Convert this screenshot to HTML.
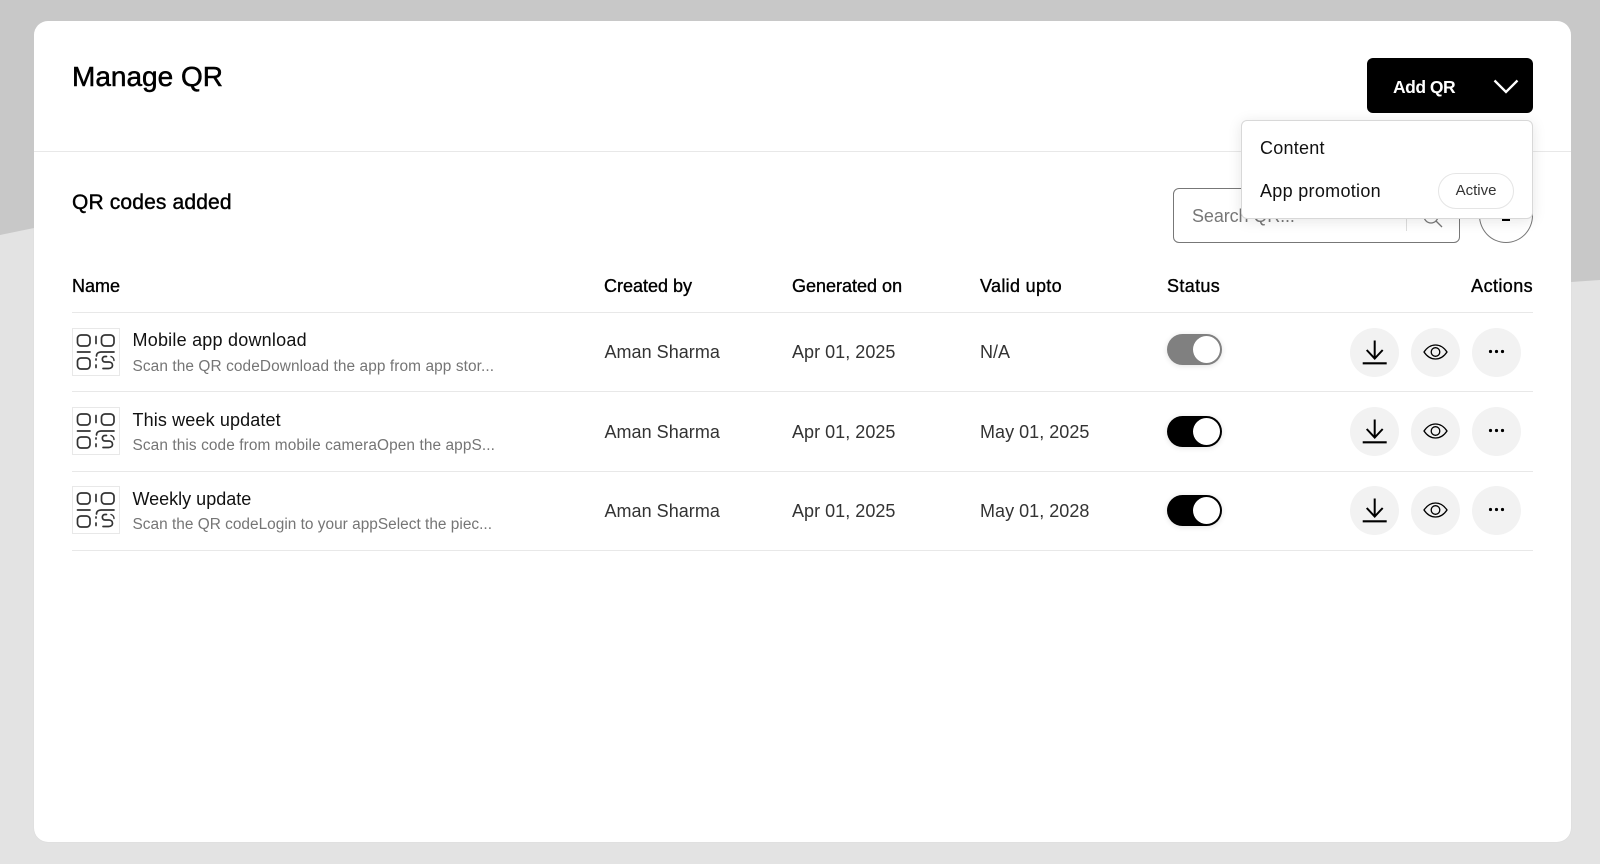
<!DOCTYPE html>
<html>
<head>
<meta charset="utf-8">
<style>
html,body{margin:0;padding:0;width:1600px;height:864px;overflow:hidden;background:#e3e3e3;font-family:"Liberation Sans",sans-serif;color:#000}
.a{position:absolute;white-space:nowrap}
#bg{position:absolute;left:0;top:0}
#card{position:absolute;left:34px;top:21px;width:1537px;height:821px;background:#fff;border-radius:14px;box-shadow:0 0 1px #ccc}
.line{position:absolute;left:72px;width:1461px;height:1px;background:#e8e8e8}
.m{-webkit-text-stroke:.4px currentColor}
.th{font-size:18px;line-height:22px;top:275px;-webkit-text-stroke:.35px #000;color:#000}
.td{font-size:18px;line-height:22px;color:#333;letter-spacing:.03px}
.t1{font-size:18px;line-height:22px;color:#111;letter-spacing:.22px}
.t2{font-size:15.4px;line-height:20px;color:#757575;letter-spacing:.1px}
.qr{position:absolute;left:71.500px;width:46px;height:46px;border:1px solid #e8e8e8}
.tg{position:absolute;left:1167px;width:55px;height:31px;border-radius:16px}
.tg i{position:absolute;right:2px;top:2px;width:27px;height:27px;border-radius:50%;background:#fff}
.cb{position:absolute;width:49px;height:49px;border-radius:50%;background:#f2f2f2}
</style>
</head>
<body>
<svg id="bg" width="1600" height="864" viewBox="0 0 1600 864">
<rect width="1600" height="864" fill="#e3e3e3"/>
<path d="M0 0H1600V280L1571 282L34 228L0 235Z" fill="#c8c8c8"/>
</svg>
<div id="card"></div>

<div class="a" style="left:72px;top:60px;font-size:28px;line-height:34px;-webkit-text-stroke:.5px #000">Manage QR</div>
<div class="a" style="left:1367px;top:58px;width:166px;height:55px;background:#000;border-radius:6px"></div>
<div class="a" style="left:1393px;top:76px;font-size:17.5px;line-height:22px;font-weight:700;color:#fff;letter-spacing:-.5px">Add QR</div>
<svg class="a" style="left:1490px;top:74px" width="32" height="24" viewBox="0 0 32 24"><path d="M4.500 6.500L16 18L27.500 6.500" fill="none" stroke="#fff" stroke-width="2.300"/></svg>
<div class="line" style="left:34px;width:1537px;top:151px"></div>

<div class="a m" style="left:72px;top:191px;font-size:21px;line-height:24px;letter-spacing:.15px">QR codes added</div>

<div class="a" style="left:1173px;top:188px;width:285px;height:53px;border:1px solid #777;border-radius:6px;background:#fff"></div>
<div class="a" style="left:1192px;top:205px;font-size:18px;line-height:22px;color:#777;letter-spacing:-.1px">Search QR...</div>
<div class="a" style="left:1406px;top:205px;width:1px;height:26px;background:#ddd"></div>
<svg class="a" style="left:1420px;top:205px" width="26" height="26" viewBox="0 0 26 26"><circle cx="11" cy="11" r="7" fill="none" stroke="#777" stroke-width="1.300"/><path d="M16 16L22 22" stroke="#777" stroke-width="1.300"/></svg>
<div class="a" style="left:1479px;top:188px;width:52px;height:53px;border:1px solid #777;border-radius:50%;background:#fff"></div>
<div class="a" style="left:1502px;top:219px;width:8px;height:2px;background:#000"></div>

<div class="a" style="left:1241px;top:120px;width:290px;height:97px;background:#fff;border:1px solid #d8d8d8;border-radius:6px;box-shadow:0 2px 14px rgba(0,0,0,.1)"></div>
<div class="a" style="left:1260px;top:137px;font-size:18px;line-height:22px;color:#111;letter-spacing:.25px">Content</div>
<div class="a" style="left:1260px;top:180px;font-size:18px;line-height:22px;color:#111;letter-spacing:.3px">App promotion</div>
<div class="a" style="left:1438px;top:173px;width:74px;height:34px;border:1px solid #e5e5e5;border-radius:18px;text-align:center;font-size:15px;line-height:34px;color:#333">Active</div>

<div class="a th" style="left:72px">Name</div>
<div class="a th" style="left:604px">Created by</div>
<div class="a th" style="left:792px">Generated on</div>
<div class="a th" style="left:980px;letter-spacing:.32px">Valid upto</div>
<div class="a th" style="left:1167px;letter-spacing:.35px">Status</div>
<div class="a th" style="right:67px;letter-spacing:.4px">Actions</div>
<div class="line" style="top:312px"></div>
<div class="line" style="top:391px"></div>
<div class="line" style="top:471px"></div>
<div class="line" style="top:550px"></div>

<svg width="0" height="0" style="position:absolute"><defs>
<g id="q" fill="none" stroke="#333" stroke-width="1.700" stroke-linecap="round">
<rect x="4.500" y="6" width="12.500" height="11" rx="3.500"/>
<rect x="28.500" y="6" width="12.500" height="11" rx="3.500"/>
<path d="M23 7.500V14.500"/>
<path d="M4.500 23H17"/>
<rect x="4.500" y="29" width="12.500" height="11" rx="3.500"/>
<path d="M23 30V31M23 36V38.500"/>
<path d="M23.500 27C23.500 24.500 25.500 23 28 23H41"/>
<path d="M33.500 27.500H32C28.500 27.500 28.500 33 32 33H36C40.500 33 41 39.500 35.500 39.500H30"/>
<path d="M38 27.500C39.500 28 41 29.500 41 31.500" stroke-width="1.400"/>
</g>
<g id="d" fill="none" stroke="#000" stroke-width="2">
<path d="M24.700 12.500V30.500M16.700 22L24.700 30.500L32.700 22"/>
<path d="M12.700 35.300H36.700" stroke-width="2.200"/>
</g>
<g id="e" fill="none" stroke="#000" stroke-width="1.300">
<path d="M13 24C16.500 18.800 20.300 17 24.500 17C28.700 17 32.500 18.800 36 24C32.500 29.200 28.700 31 24.500 31C20.300 31 16.500 29.200 13 24Z"/>
<circle cx="24.500" cy="24" r="4.300"/>
</g>
<g id="o" fill="#000"><circle cx="18.500" cy="23.500" r="1.600"/><circle cx="24.500" cy="23.500" r="1.600"/><circle cx="30.500" cy="23.500" r="1.600"/></g>
</defs></svg>

<!-- Row 1 -->
<div class="qr" style="top:328px"><svg width="46" height="46"><use href="#q"/></svg></div>
<div class="a t1" style="left:132.500px;top:329px">Mobile app download</div>
<div class="a t2" style="left:132.500px;top:356.500px">Scan the QR codeDownload the app from app stor...</div>
<div class="a td" style="left:604.500px;top:341px">Aman Sharma</div>
<div class="a td" style="left:792px;top:341px">Apr 01, 2025</div>
<div class="a td" style="left:980px;top:341px">N/A</div>
<div class="tg" style="top:334px;background:#808080;box-shadow:0 1px 6px rgba(0,0,0,.12)"><i></i></div>
<div class="cb" style="left:1350px;top:328px"><svg width="49" height="49"><use href="#d"/></svg></div>
<div class="cb" style="left:1411px;top:328px"><svg width="49" height="49"><use href="#e"/></svg></div>
<div class="cb" style="left:1472px;top:328px"><svg width="49" height="49"><use href="#o"/></svg></div>

<!-- Row 2 -->
<div class="qr" style="top:407px"><svg width="46" height="46"><use href="#q"/></svg></div>
<div class="a t1" style="left:132.500px;top:408.500px;letter-spacing:.13px">This week updatet</div>
<div class="a t2" style="left:132.500px;top:435.500px">Scan this code from mobile cameraOpen the appS...</div>
<div class="a td" style="left:604.500px;top:420.500px">Aman Sharma</div>
<div class="a td" style="left:792px;top:420.500px">Apr 01, 2025</div>
<div class="a td" style="left:980px;top:420.500px">May 01, 2025</div>
<div class="tg" style="top:416px;background:#000;box-shadow:0 1px 6px rgba(0,0,0,.12)"><i></i></div>
<div class="cb" style="left:1350px;top:407px"><svg width="49" height="49"><use href="#d"/></svg></div>
<div class="cb" style="left:1411px;top:407px"><svg width="49" height="49"><use href="#e"/></svg></div>
<div class="cb" style="left:1472px;top:407px"><svg width="49" height="49"><use href="#o"/></svg></div>

<!-- Row 3 -->
<div class="qr" style="top:486px"><svg width="46" height="46"><use href="#q"/></svg></div>
<div class="a t1" style="left:132.500px;top:488px;letter-spacing:0">Weekly update</div>
<div class="a t2" style="left:132.500px;top:514.500px;letter-spacing:.02px">Scan the QR codeLogin to your appSelect the piec...</div>
<div class="a td" style="left:604.500px;top:500px">Aman Sharma</div>
<div class="a td" style="left:792px;top:500px">Apr 01, 2025</div>
<div class="a td" style="left:980px;top:500px">May 01, 2028</div>
<div class="tg" style="top:495px;background:#000;box-shadow:0 1px 6px rgba(0,0,0,.12)"><i></i></div>
<div class="cb" style="left:1350px;top:486px"><svg width="49" height="49"><use href="#d"/></svg></div>
<div class="cb" style="left:1411px;top:486px"><svg width="49" height="49"><use href="#e"/></svg></div>
<div class="cb" style="left:1472px;top:486px"><svg width="49" height="49"><use href="#o"/></svg></div>
</body>
</html>
